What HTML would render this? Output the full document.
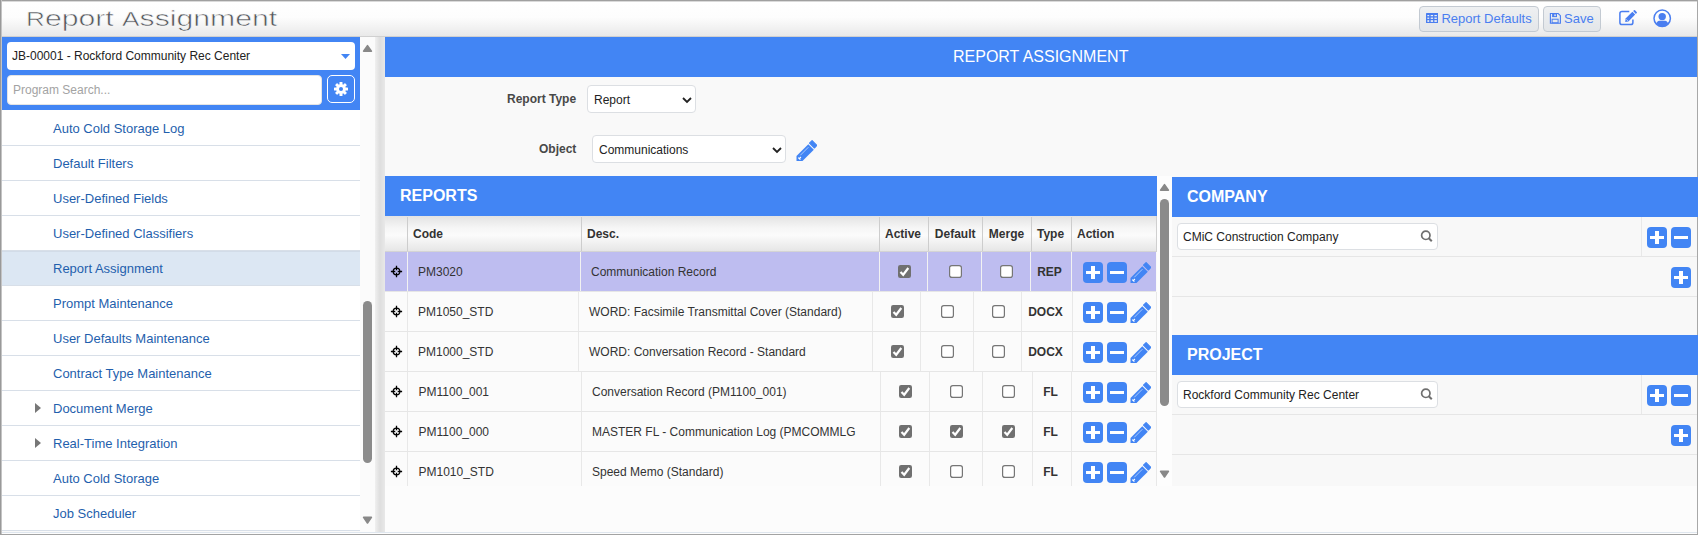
<!DOCTYPE html>
<html><head><meta charset="utf-8">
<style>
*{box-sizing:border-box;margin:0;padding:0}
html,body{width:1698px;height:535px;overflow:hidden;background:#f9f9f9;font-family:"Liberation Sans",sans-serif;position:relative}
.abs{position:absolute}
.txt{position:absolute;white-space:nowrap;line-height:1}
.btnsq{width:20px;height:21px;border-radius:4px;background:#4285f4}
.item{position:absolute;left:2px;width:358px;height:35px;border-bottom:1px solid #d8dfe8;color:#2062ab;font-size:13px;line-height:35px;padding-left:52px;white-space:nowrap;background:#fff}
.vl{position:absolute;width:1px}
.hl{position:absolute;height:1px}
</style></head>
<body>

<div class="abs" style="left:0;top:0;width:1698px;height:1px;background:#a0a0a0"></div>
<div class="abs" style="left:0;top:1px;width:1698px;height:1px;background:#dadada"></div>
<div class="abs" style="left:0;top:0;width:1px;height:535px;background:#999"></div>
<div class="abs" style="left:1px;top:0;width:1px;height:535px;background:#c4c4c4"></div>
<div class="abs" style="left:1697px;top:0;width:1px;height:535px;background:#a8a8a8"></div>
<div class="abs" style="left:2px;top:2px;width:1695px;height:34px;background:linear-gradient(#ffffff 0%,#fdfdfd 45%,#e9e9e9 100%)"></div>
<div class="abs" style="left:2px;top:36px;width:1695px;height:1px;background:#d0d0d0"></div>
<div class="txt" style="left:26px;top:7px;color:#55585d;transform:scaleX(1.33);transform-origin:0 0;-webkit-text-stroke:0.55px #fafafa;"><span style="font-size:19.7px">R</span><span style="font-size:22.7px">eport </span><span style="font-size:19.7px">A</span><span style="font-size:22.7px">ssignment</span></div>
<div class="abs" style="left:1419px;top:6px;width:120px;height:26px;border:1px solid #c3cad2;border-radius:4px;background:linear-gradient(#eef0f2,#e3e6e9)"></div>
<div class="abs" style="left:1543px;top:6px;width:58px;height:26px;border:1px solid #c3cad2;border-radius:4px;background:linear-gradient(#eef0f2,#e3e6e9)"></div>
<div class="txt" style="left:1441.4px;top:11.5px;font-size:13px;color:#4a7ef0">Report Defaults</div>
<div class="txt" style="left:1564px;top:11.5px;font-size:13px;color:#4a7ef0">Save</div>
<svg class="abs" style="left:1425.7px;top:12.9px" width="12.3" height="10.2" viewBox="0 0 12.3 10.2"><rect x="0" y="0" width="12.3" height="10.2" rx="0.6" fill="#4a7ef0"/>
<g fill="#eef1f4"><rect x="1.35" y="2.0" width="1.85" height="1.2"/><rect x="1.35" y="4.6" width="1.85" height="1.3"/><rect x="1.35" y="7.2" width="1.85" height="1.7"/><rect x="4.7" y="2.0" width="2.4" height="1.2"/><rect x="4.7" y="4.6" width="2.4" height="1.3"/><rect x="4.7" y="7.2" width="2.4" height="1.7"/><rect x="8.4" y="2.0" width="2.5" height="1.2"/><rect x="8.4" y="4.6" width="2.5" height="1.3"/><rect x="8.4" y="7.2" width="2.5" height="1.7"/></g></svg>
<svg class="abs" style="left:1549px;top:12px" width="13" height="13" viewBox="0 0 13 13"><path d="M1.4 1.5 H9.2 L11.4 3.7 V11.2 H1.4 Z" fill="none" stroke="#4a7ef0" stroke-width="1.15"/>
<rect x="3.1" y="1.8" width="4.9" height="3.3" fill="#4a7ef0"/><rect x="5.3" y="2.4" width="1.5" height="1.7" fill="#e6eaee"/><rect x="3.1" y="7.2" width="6" height="3.6" fill="none" stroke="#4a7ef0" stroke-width="1"/></svg>
<svg class="abs" style="left:1619px;top:10px" width="19" height="16" viewBox="0 0 19 16"><path d="M10.3 1.5 H3 Q0.9 1.5 0.9 3.6 V12.4 Q0.9 14.5 3 14.5 H11.8 Q13.9 14.5 13.9 12.4 V9.6" fill="none" stroke="#4a7ef0" stroke-width="1.5"/>
<path d="M6.6 8.6 L13.4 1.8 L16.2 4.6 L9.4 11.4 L6.2 12 Z" fill="#4a7ef0"/>
<path d="M14.1 1.1 L15 0.2 Q15.5 -0.2 16 0.3 L17.7 2 Q18.2 2.5 17.7 3 L16.9 3.9 Z" fill="#4a7ef0"/>
<path d="M7.6 9.6 L8.6 10.6" stroke="#fff" stroke-width="0.9"/>
</svg>
<svg class="abs" style="left:1653px;top:9px" width="19" height="19" viewBox="0 0 19 19"><circle cx="9.2" cy="9.3" r="8.2" fill="none" stroke="#4a7ef0" stroke-width="1.5"/>
<circle cx="9.2" cy="7.6" r="3.7" fill="#4a7ef0"/><path d="M3.2 14.6 Q4.4 11.6 7.4 11.6 H11 Q14 11.6 15.2 14.6 Q12.8 17.7 9.2 17.7 Q5.6 17.7 3.2 14.6 Z" fill="#4a7ef0"/>
<path d="M6.3 11.35 H12.1" stroke="#fff" stroke-width="0.6" opacity="0.8"/></svg>
<div class="abs" style="left:2px;top:37px;width:358px;height:494px;background:#fff"></div>
<div class="abs" style="left:2px;top:37px;width:358px;height:73px;background:#4285f4"></div>
<div class="abs" style="left:7px;top:42px;width:348px;height:28px;background:#fff;border-radius:4px"></div>
<div class="txt" style="left:12px;top:50px;font-size:12px;color:#222">JB-00001 - Rockford Community Rec Center</div>
<svg class="abs" style="left:341px;top:54px" width="9" height="5" viewBox="0 0 9 5"><path d="M0 0 H9 L4.5 5 Z" fill="#4285f4"/></svg>
<div class="abs" style="left:7px;top:75px;width:315px;height:30px;background:#fff;border-radius:4px;border:1px solid #e4e4e4"></div>
<div class="txt" style="left:13px;top:84px;font-size:12px;color:#a3a3a3">Program Search...</div>
<div class="abs" style="left:327px;top:75px;width:28px;height:28px;border:1px solid #fff;border-radius:5px"></div>
<svg class="abs" style="left:334px;top:82px" width="14" height="14" viewBox="0 0 14 14"><g fill="#fff" transform="translate(7 7)">
<circle r="4.8"/>
<rect x="-1.5" y="-7" width="3" height="14" rx="0.6"/><rect x="-1.5" y="-7" width="3" height="14" rx="0.6" transform="rotate(45)"/>
<rect x="-1.5" y="-7" width="3" height="14" rx="0.6" transform="rotate(90)"/><rect x="-1.5" y="-7" width="3" height="14" rx="0.6" transform="rotate(135)"/>
</g><circle cx="7" cy="7" r="2" fill="#4285f4"/></svg>
<div class="item" style="top:110px;height:36px;"></div>
<div class="txt" style="left:53px;top:122px;font-size:13px;color:#1f5fad">Auto Cold Storage Log</div>
<div class="item" style="top:146px;height:35px;"></div>
<div class="txt" style="left:53px;top:157px;font-size:13px;color:#1f5fad">Default Filters</div>
<div class="item" style="top:181px;height:35px;"></div>
<div class="txt" style="left:53px;top:192px;font-size:13px;color:#1f5fad">User-Defined Fields</div>
<div class="item" style="top:216px;height:35px;"></div>
<div class="txt" style="left:53px;top:227px;font-size:13px;color:#1f5fad">User-Defined Classifiers</div>
<div class="item" style="top:251px;height:35px;background:#dce7f3;border-top:1px solid #d2dce8;"></div>
<div class="txt" style="left:53px;top:262px;font-size:13px;color:#1f5fad">Report Assignment</div>
<div class="item" style="top:286px;height:35px;"></div>
<div class="txt" style="left:53px;top:297px;font-size:13px;color:#1f5fad">Prompt Maintenance</div>
<div class="item" style="top:321px;height:35px;"></div>
<div class="txt" style="left:53px;top:332px;font-size:13px;color:#1f5fad">User Defaults Maintenance</div>
<div class="item" style="top:356px;height:35px;"></div>
<div class="txt" style="left:53px;top:367px;font-size:13px;color:#1f5fad">Contract Type Maintenance</div>
<div class="item" style="top:391px;height:35px;"></div>
<div class="txt" style="left:53px;top:402px;font-size:13px;color:#1f5fad">Document Merge</div>
<svg class="abs" style="left:35px;top:403px" width="6" height="10" viewBox="0 0 6 10"><path d="M0 0 L6 5 L0 10 Z" fill="#777"/></svg>
<div class="item" style="top:426px;height:35px;"></div>
<div class="txt" style="left:53px;top:437px;font-size:13px;color:#1f5fad">Real-Time Integration</div>
<svg class="abs" style="left:35px;top:438px" width="6" height="10" viewBox="0 0 6 10"><path d="M0 0 L6 5 L0 10 Z" fill="#777"/></svg>
<div class="item" style="top:461px;height:35px;"></div>
<div class="txt" style="left:53px;top:472px;font-size:13px;color:#1f5fad">Auto Cold Storage</div>
<div class="item" style="top:496px;height:35px;"></div>
<div class="txt" style="left:53px;top:507px;font-size:13px;color:#1f5fad">Job Scheduler</div>
<div class="abs" style="left:2px;top:530px;width:358px;height:1px;background:#d8dfe8"></div>
<div class="abs" style="left:360px;top:37px;width:15px;height:495px;background:#fbfbfb"></div>
<svg class="abs" style="left:362px;top:44px" width="11" height="9" viewBox="0 0 11 9"><path d="M1.6 7.2 H9.4 L5.5 1.6 Z" fill="#888" stroke="#888" stroke-width="1.6" stroke-linejoin="round"/></svg>
<svg class="abs" style="left:362px;top:516px" width="11" height="9" viewBox="0 0 11 9"><path d="M1.6 1.4 H9.4 L5.5 7 Z" fill="#888" stroke="#888" stroke-width="1.6" stroke-linejoin="round"/></svg>
<div class="abs" style="left:363px;top:301px;width:9px;height:162px;border-radius:4.5px;background:#8b8b8b"></div>
<div class="abs" style="left:375px;top:37px;width:10px;height:495px;background:linear-gradient(90deg,#f0f0f0,#dedede 50%,#e8e8e8)"></div>
<div class="abs" style="left:385px;top:37px;width:1312px;height:40px;background:#4285f4"></div>
<div class="txt" style="left:953px;top:49px;font-size:16px;color:#fff">REPORT ASSIGNMENT</div>
<div class="txt" style="left:507px;top:93px;font-size:12px;font-weight:bold;color:#484848">Report Type</div>
<div class="abs" style="left:587px;top:85px;width:109px;height:28px;background:#fff;border:1px solid #dcdfe3;border-radius:4px"></div>
<div class="txt" style="left:594px;top:94px;font-size:12px;color:#222">Report</div>
<svg class="abs" style="left:682px;top:96.5px" width="10" height="7" viewBox="0 0 10 7"><path d="M1 1 L5 5 L9 1" fill="none" stroke="#222" stroke-width="1.8"/></svg>
<div class="txt" style="left:539px;top:143px;font-size:12px;font-weight:bold;color:#484848">Object</div>
<div class="abs" style="left:592px;top:135px;width:194px;height:28px;background:#fff;border:1px solid #dcdfe3;border-radius:4px"></div>
<div class="txt" style="left:599px;top:144px;font-size:12px;color:#222">Communications</div>
<svg class="abs" style="left:772px;top:146.5px" width="10" height="7" viewBox="0 0 10 7"><path d="M1 1 L5 5 L9 1" fill="none" stroke="#222" stroke-width="1.8"/></svg>
<svg class="abs" style="left:796px;top:140px" width="21" height="21" viewBox="0 0 21 21">
<path fill="#4285f4" d="M0.5 16 L12.3 4.2 L17.8 9.7 L6.5 21 L0.5 21 Z"/>
<path fill="#4285f4" stroke="#4285f4" stroke-width="1.1" stroke-linejoin="round" d="M13.5 3.1 L16.1 0.6 L20.9 5.4 L18.4 8 Z"/>
<path stroke="#fff" stroke-width="0.7" opacity="0.8" d="M4.3 15.3 L12.4 7.2"/>
<path stroke="#fff" stroke-width="1.2" d="M2.2 17.6 L4.4 19.6 M3.3 18.6 L4.9 17.0"/>
</svg>
<div class="abs" style="left:385px;top:176px;width:772px;height:40px;background:#4285f4"></div>
<div class="txt" style="left:400px;top:188px;font-size:16px;font-weight:bold;color:#fff">REPORTS</div>
<div class="abs" style="left:385px;top:216px;width:772px;height:36px;background:linear-gradient(#e3e3e3 0%,#f6f6f6 35%,#fbfbfb 55%,#e6e6e6 100%);border-bottom:1px solid #d4d4d4"></div>
<div class="vl" style="left:407px;top:217px;height:34px;background:#cdcdcd"></div>
<div class="vl" style="left:581px;top:217px;height:34px;background:#cdcdcd"></div>
<div class="vl" style="left:879px;top:217px;height:34px;background:#cdcdcd"></div>
<div class="vl" style="left:928px;top:217px;height:34px;background:#cdcdcd"></div>
<div class="vl" style="left:982px;top:217px;height:34px;background:#cdcdcd"></div>
<div class="vl" style="left:1031px;top:217px;height:34px;background:#cdcdcd"></div>
<div class="vl" style="left:1071px;top:217px;height:34px;background:#cdcdcd"></div>
<div class="vl" style="left:1156px;top:216px;height:36px;background:#cfcfcf"></div>
<div class="txt" style="left:413px;top:228px;font-size:12px;font-weight:bold;color:#333">Code</div>
<div class="txt" style="left:587px;top:228px;font-size:12px;font-weight:bold;color:#333">Desc.</div>
<div class="txt" style="left:885px;top:228px;font-size:12px;font-weight:bold;color:#333">Active</div>
<div class="txt" style="left:934.8px;top:228px;font-size:12px;font-weight:bold;color:#333">Default</div>
<div class="txt" style="left:988.8px;top:228px;font-size:12px;font-weight:bold;color:#333">Merge</div>
<div class="txt" style="left:1037px;top:228px;font-size:12px;font-weight:bold;color:#333">Type</div>
<div class="txt" style="left:1077px;top:228px;font-size:12px;font-weight:bold;color:#333">Action</div>
<div class="abs" style="left:385px;top:252px;width:772px;height:234px;overflow:hidden">
<div class="abs" style="left:0;top:0px;width:771px;height:40px;background:#bebdf0;border-bottom:1px solid #e6e6e6"></div>
<div class="vl" style="left:22px;top:0px;height:39px;background:#f2f2f2"></div>
<div class="vl" style="left:195px;top:0px;height:39px;background:#f2f2f2"></div>
<div class="vl" style="left:494px;top:0px;height:39px;background:#f2f2f2"></div>
<div class="vl" style="left:542px;top:0px;height:39px;background:#f2f2f2"></div>
<div class="vl" style="left:596px;top:0px;height:39px;background:#f2f2f2"></div>
<div class="vl" style="left:645px;top:0px;height:39px;background:#f2f2f2"></div>
<div class="vl" style="left:686px;top:0px;height:39px;background:#f2f2f2"></div>
<svg class="abs" style="left:5px;top:12.8px" width="13" height="13" viewBox="0 0 13 13">
<circle cx="6.5" cy="6.5" r="3.35" fill="none" stroke="#000" stroke-width="1.2"/>
<path stroke="#000" stroke-width="1.3" d="M6.5 0.8 V5.3 M6.5 7.7 V12.2 M0.9 6.5 H5.3 M7.7 6.5 H12.1"/>
</svg>
<div class="txt" style="left:33px;top:13.9px;font-size:12px;color:#333">PM3020</div>
<div class="txt" style="left:206px;top:13.9px;font-size:12px;color:#333">Communication Record</div>
<svg class="abs" style="left:512.5px;top:13.0px" width="13" height="13" viewBox="0 0 13 13"><rect x="0" y="0" width="13" height="13" rx="2.2" fill="#707070"/><path d="M2.5 6.9 L5.2 9.7 L10.3 3.0" fill="none" stroke="#fff" stroke-width="2.2"/></svg>
<svg class="abs" style="left:563.8px;top:13.0px" width="13" height="13" viewBox="0 0 13 13"><rect x="0.6" y="0.6" width="11.8" height="11.8" rx="2.2" fill="#fff" stroke="#767676" stroke-width="1.2"/></svg>
<svg class="abs" style="left:614.5px;top:13.0px" width="13" height="13" viewBox="0 0 13 13"><rect x="0.6" y="0.6" width="11.8" height="11.8" rx="2.2" fill="#fff" stroke="#767676" stroke-width="1.2"/></svg>
<div class="txt" style="left:624.5px;width:80px;text-align:center;top:13.9px;font-size:12px;font-weight:bold;color:#333">REP</div>
<div class="abs btnsq" style="left:697.7px;top:10px"><div class="abs" style="left:3px;top:9px;width:14px;height:3px;background:#fff"></div><div class="abs" style="left:8.4px;top:4px;width:3.8px;height:13px;background:#fff"></div></div>
<div class="abs btnsq" style="left:721.5px;top:10px"><div class="abs" style="left:3.5px;top:9px;width:14px;height:3px;background:#fff"></div></div>
<svg class="abs" style="left:745px;top:10px" width="21" height="21" viewBox="0 0 21 21">
<path fill="#4285f4" d="M0.5 16 L12.3 4.2 L17.8 9.7 L6.5 21 L0.5 21 Z"/>
<path fill="#4285f4" stroke="#4285f4" stroke-width="1.1" stroke-linejoin="round" d="M13.5 3.1 L16.1 0.6 L20.9 5.4 L18.4 8 Z"/>
<path stroke="#fff" stroke-width="0.7" opacity="0.8" d="M4.3 15.3 L12.4 7.2"/>
<path stroke="#fff" stroke-width="1.2" d="M2.2 17.6 L4.4 19.6 M3.3 18.6 L4.9 17.0"/>
</svg>
<div class="abs" style="left:0;top:40px;width:771px;height:40px;background:#fbfbfb;border-bottom:1px solid #e6e6e6"></div>
<div class="vl" style="left:22px;top:40px;height:39px;background:#e8e8e8"></div>
<div class="vl" style="left:193px;top:40px;height:39px;background:#e8e8e8"></div>
<div class="vl" style="left:487px;top:40px;height:39px;background:#e8e8e8"></div>
<div class="vl" style="left:535px;top:40px;height:39px;background:#e8e8e8"></div>
<div class="vl" style="left:588px;top:40px;height:39px;background:#e8e8e8"></div>
<div class="vl" style="left:636px;top:40px;height:39px;background:#e8e8e8"></div>
<div class="vl" style="left:687px;top:40px;height:39px;background:#e8e8e8"></div>
<div class="vl" style="left:771px;top:40px;height:40px;background:#e8e8e8"></div>
<svg class="abs" style="left:5px;top:52.8px" width="13" height="13" viewBox="0 0 13 13">
<circle cx="6.5" cy="6.5" r="3.35" fill="none" stroke="#000" stroke-width="1.2"/>
<path stroke="#000" stroke-width="1.3" d="M6.5 0.8 V5.3 M6.5 7.7 V12.2 M0.9 6.5 H5.3 M7.7 6.5 H12.1"/>
</svg>
<div class="txt" style="left:33px;top:53.9px;font-size:12px;color:#333">PM1050_STD</div>
<div class="txt" style="left:204px;top:53.9px;font-size:12px;color:#333">WORD: Facsimile Transmittal Cover (Standard)</div>
<svg class="abs" style="left:505.5px;top:53.0px" width="13" height="13" viewBox="0 0 13 13"><rect x="0" y="0" width="13" height="13" rx="2.2" fill="#707070"/><path d="M2.5 6.9 L5.2 9.7 L10.3 3.0" fill="none" stroke="#fff" stroke-width="2.2"/></svg>
<svg class="abs" style="left:555.5px;top:53.0px" width="13" height="13" viewBox="0 0 13 13"><rect x="0.6" y="0.6" width="11.8" height="11.8" rx="2.2" fill="#fff" stroke="#767676" stroke-width="1.2"/></svg>
<svg class="abs" style="left:607.0px;top:53.0px" width="13" height="13" viewBox="0 0 13 13"><rect x="0.6" y="0.6" width="11.8" height="11.8" rx="2.2" fill="#fff" stroke="#767676" stroke-width="1.2"/></svg>
<div class="txt" style="left:620.5px;width:80px;text-align:center;top:53.9px;font-size:12px;font-weight:bold;color:#333">DOCX</div>
<div class="abs btnsq" style="left:697.7px;top:50px"><div class="abs" style="left:3px;top:9px;width:14px;height:3px;background:#fff"></div><div class="abs" style="left:8.4px;top:4px;width:3.8px;height:13px;background:#fff"></div></div>
<div class="abs btnsq" style="left:721.5px;top:50px"><div class="abs" style="left:3.5px;top:9px;width:14px;height:3px;background:#fff"></div></div>
<svg class="abs" style="left:745px;top:50px" width="21" height="21" viewBox="0 0 21 21">
<path fill="#4285f4" d="M0.5 16 L12.3 4.2 L17.8 9.7 L6.5 21 L0.5 21 Z"/>
<path fill="#4285f4" stroke="#4285f4" stroke-width="1.1" stroke-linejoin="round" d="M13.5 3.1 L16.1 0.6 L20.9 5.4 L18.4 8 Z"/>
<path stroke="#fff" stroke-width="0.7" opacity="0.8" d="M4.3 15.3 L12.4 7.2"/>
<path stroke="#fff" stroke-width="1.2" d="M2.2 17.6 L4.4 19.6 M3.3 18.6 L4.9 17.0"/>
</svg>
<div class="abs" style="left:0;top:80px;width:771px;height:40px;background:#fbfbfb;border-bottom:1px solid #e6e6e6"></div>
<div class="vl" style="left:22px;top:80px;height:39px;background:#e8e8e8"></div>
<div class="vl" style="left:193px;top:80px;height:39px;background:#e8e8e8"></div>
<div class="vl" style="left:487px;top:80px;height:39px;background:#e8e8e8"></div>
<div class="vl" style="left:535px;top:80px;height:39px;background:#e8e8e8"></div>
<div class="vl" style="left:588px;top:80px;height:39px;background:#e8e8e8"></div>
<div class="vl" style="left:636px;top:80px;height:39px;background:#e8e8e8"></div>
<div class="vl" style="left:687px;top:80px;height:39px;background:#e8e8e8"></div>
<div class="vl" style="left:771px;top:80px;height:40px;background:#e8e8e8"></div>
<svg class="abs" style="left:5px;top:92.8px" width="13" height="13" viewBox="0 0 13 13">
<circle cx="6.5" cy="6.5" r="3.35" fill="none" stroke="#000" stroke-width="1.2"/>
<path stroke="#000" stroke-width="1.3" d="M6.5 0.8 V5.3 M6.5 7.7 V12.2 M0.9 6.5 H5.3 M7.7 6.5 H12.1"/>
</svg>
<div class="txt" style="left:33px;top:93.9px;font-size:12px;color:#333">PM1000_STD</div>
<div class="txt" style="left:204px;top:93.9px;font-size:12px;color:#333">WORD: Conversation Record - Standard</div>
<svg class="abs" style="left:505.5px;top:93.0px" width="13" height="13" viewBox="0 0 13 13"><rect x="0" y="0" width="13" height="13" rx="2.2" fill="#707070"/><path d="M2.5 6.9 L5.2 9.7 L10.3 3.0" fill="none" stroke="#fff" stroke-width="2.2"/></svg>
<svg class="abs" style="left:555.5px;top:93.0px" width="13" height="13" viewBox="0 0 13 13"><rect x="0.6" y="0.6" width="11.8" height="11.8" rx="2.2" fill="#fff" stroke="#767676" stroke-width="1.2"/></svg>
<svg class="abs" style="left:607.0px;top:93.0px" width="13" height="13" viewBox="0 0 13 13"><rect x="0.6" y="0.6" width="11.8" height="11.8" rx="2.2" fill="#fff" stroke="#767676" stroke-width="1.2"/></svg>
<div class="txt" style="left:620.5px;width:80px;text-align:center;top:93.9px;font-size:12px;font-weight:bold;color:#333">DOCX</div>
<div class="abs btnsq" style="left:697.7px;top:90px"><div class="abs" style="left:3px;top:9px;width:14px;height:3px;background:#fff"></div><div class="abs" style="left:8.4px;top:4px;width:3.8px;height:13px;background:#fff"></div></div>
<div class="abs btnsq" style="left:721.5px;top:90px"><div class="abs" style="left:3.5px;top:9px;width:14px;height:3px;background:#fff"></div></div>
<svg class="abs" style="left:745px;top:90px" width="21" height="21" viewBox="0 0 21 21">
<path fill="#4285f4" d="M0.5 16 L12.3 4.2 L17.8 9.7 L6.5 21 L0.5 21 Z"/>
<path fill="#4285f4" stroke="#4285f4" stroke-width="1.1" stroke-linejoin="round" d="M13.5 3.1 L16.1 0.6 L20.9 5.4 L18.4 8 Z"/>
<path stroke="#fff" stroke-width="0.7" opacity="0.8" d="M4.3 15.3 L12.4 7.2"/>
<path stroke="#fff" stroke-width="1.2" d="M2.2 17.6 L4.4 19.6 M3.3 18.6 L4.9 17.0"/>
</svg>
<div class="abs" style="left:0;top:120px;width:771px;height:40px;background:#fbfbfb;border-bottom:1px solid #e6e6e6"></div>
<div class="vl" style="left:22px;top:120px;height:39px;background:#e8e8e8"></div>
<div class="vl" style="left:196px;top:120px;height:39px;background:#e8e8e8"></div>
<div class="vl" style="left:495px;top:120px;height:39px;background:#e8e8e8"></div>
<div class="vl" style="left:544px;top:120px;height:39px;background:#e8e8e8"></div>
<div class="vl" style="left:597px;top:120px;height:39px;background:#e8e8e8"></div>
<div class="vl" style="left:647px;top:120px;height:39px;background:#e8e8e8"></div>
<div class="vl" style="left:686px;top:120px;height:39px;background:#e8e8e8"></div>
<div class="vl" style="left:771px;top:120px;height:40px;background:#e8e8e8"></div>
<svg class="abs" style="left:5px;top:132.8px" width="13" height="13" viewBox="0 0 13 13">
<circle cx="6.5" cy="6.5" r="3.35" fill="none" stroke="#000" stroke-width="1.2"/>
<path stroke="#000" stroke-width="1.3" d="M6.5 0.8 V5.3 M6.5 7.7 V12.2 M0.9 6.5 H5.3 M7.7 6.5 H12.1"/>
</svg>
<div class="txt" style="left:33.5px;top:133.9px;font-size:12px;color:#333">PM1100_001</div>
<div class="txt" style="left:207px;top:133.9px;font-size:12px;color:#333">Conversation Record (PM1100_001)</div>
<svg class="abs" style="left:514.0px;top:133.0px" width="13" height="13" viewBox="0 0 13 13"><rect x="0" y="0" width="13" height="13" rx="2.2" fill="#707070"/><path d="M2.5 6.9 L5.2 9.7 L10.3 3.0" fill="none" stroke="#fff" stroke-width="2.2"/></svg>
<svg class="abs" style="left:564.5px;top:133.0px" width="13" height="13" viewBox="0 0 13 13"><rect x="0.6" y="0.6" width="11.8" height="11.8" rx="2.2" fill="#fff" stroke="#767676" stroke-width="1.2"/></svg>
<svg class="abs" style="left:617.0px;top:133.0px" width="13" height="13" viewBox="0 0 13 13"><rect x="0.6" y="0.6" width="11.8" height="11.8" rx="2.2" fill="#fff" stroke="#767676" stroke-width="1.2"/></svg>
<div class="txt" style="left:625.5px;width:80px;text-align:center;top:133.9px;font-size:12px;font-weight:bold;color:#333">FL</div>
<div class="abs btnsq" style="left:697.7px;top:130px"><div class="abs" style="left:3px;top:9px;width:14px;height:3px;background:#fff"></div><div class="abs" style="left:8.4px;top:4px;width:3.8px;height:13px;background:#fff"></div></div>
<div class="abs btnsq" style="left:721.5px;top:130px"><div class="abs" style="left:3.5px;top:9px;width:14px;height:3px;background:#fff"></div></div>
<svg class="abs" style="left:745px;top:130px" width="21" height="21" viewBox="0 0 21 21">
<path fill="#4285f4" d="M0.5 16 L12.3 4.2 L17.8 9.7 L6.5 21 L0.5 21 Z"/>
<path fill="#4285f4" stroke="#4285f4" stroke-width="1.1" stroke-linejoin="round" d="M13.5 3.1 L16.1 0.6 L20.9 5.4 L18.4 8 Z"/>
<path stroke="#fff" stroke-width="0.7" opacity="0.8" d="M4.3 15.3 L12.4 7.2"/>
<path stroke="#fff" stroke-width="1.2" d="M2.2 17.6 L4.4 19.6 M3.3 18.6 L4.9 17.0"/>
</svg>
<div class="abs" style="left:0;top:160px;width:771px;height:40px;background:#fbfbfb;border-bottom:1px solid #e6e6e6"></div>
<div class="vl" style="left:22px;top:160px;height:39px;background:#e8e8e8"></div>
<div class="vl" style="left:196px;top:160px;height:39px;background:#e8e8e8"></div>
<div class="vl" style="left:495px;top:160px;height:39px;background:#e8e8e8"></div>
<div class="vl" style="left:544px;top:160px;height:39px;background:#e8e8e8"></div>
<div class="vl" style="left:597px;top:160px;height:39px;background:#e8e8e8"></div>
<div class="vl" style="left:647px;top:160px;height:39px;background:#e8e8e8"></div>
<div class="vl" style="left:686px;top:160px;height:39px;background:#e8e8e8"></div>
<div class="vl" style="left:771px;top:160px;height:40px;background:#e8e8e8"></div>
<svg class="abs" style="left:5px;top:172.8px" width="13" height="13" viewBox="0 0 13 13">
<circle cx="6.5" cy="6.5" r="3.35" fill="none" stroke="#000" stroke-width="1.2"/>
<path stroke="#000" stroke-width="1.3" d="M6.5 0.8 V5.3 M6.5 7.7 V12.2 M0.9 6.5 H5.3 M7.7 6.5 H12.1"/>
</svg>
<div class="txt" style="left:33.5px;top:173.9px;font-size:12px;color:#333">PM1100_000</div>
<div class="txt" style="left:207px;top:173.9px;font-size:12px;color:#333">MASTER FL - Communication Log (PMCOMMLG</div>
<svg class="abs" style="left:514.0px;top:173.0px" width="13" height="13" viewBox="0 0 13 13"><rect x="0" y="0" width="13" height="13" rx="2.2" fill="#707070"/><path d="M2.5 6.9 L5.2 9.7 L10.3 3.0" fill="none" stroke="#fff" stroke-width="2.2"/></svg>
<svg class="abs" style="left:564.5px;top:173.0px" width="13" height="13" viewBox="0 0 13 13"><rect x="0" y="0" width="13" height="13" rx="2.2" fill="#707070"/><path d="M2.5 6.9 L5.2 9.7 L10.3 3.0" fill="none" stroke="#fff" stroke-width="2.2"/></svg>
<svg class="abs" style="left:617.0px;top:173.0px" width="13" height="13" viewBox="0 0 13 13"><rect x="0" y="0" width="13" height="13" rx="2.2" fill="#707070"/><path d="M2.5 6.9 L5.2 9.7 L10.3 3.0" fill="none" stroke="#fff" stroke-width="2.2"/></svg>
<div class="txt" style="left:625.5px;width:80px;text-align:center;top:173.9px;font-size:12px;font-weight:bold;color:#333">FL</div>
<div class="abs btnsq" style="left:697.7px;top:170px"><div class="abs" style="left:3px;top:9px;width:14px;height:3px;background:#fff"></div><div class="abs" style="left:8.4px;top:4px;width:3.8px;height:13px;background:#fff"></div></div>
<div class="abs btnsq" style="left:721.5px;top:170px"><div class="abs" style="left:3.5px;top:9px;width:14px;height:3px;background:#fff"></div></div>
<svg class="abs" style="left:745px;top:170px" width="21" height="21" viewBox="0 0 21 21">
<path fill="#4285f4" d="M0.5 16 L12.3 4.2 L17.8 9.7 L6.5 21 L0.5 21 Z"/>
<path fill="#4285f4" stroke="#4285f4" stroke-width="1.1" stroke-linejoin="round" d="M13.5 3.1 L16.1 0.6 L20.9 5.4 L18.4 8 Z"/>
<path stroke="#fff" stroke-width="0.7" opacity="0.8" d="M4.3 15.3 L12.4 7.2"/>
<path stroke="#fff" stroke-width="1.2" d="M2.2 17.6 L4.4 19.6 M3.3 18.6 L4.9 17.0"/>
</svg>
<div class="abs" style="left:0;top:200px;width:771px;height:40px;background:#fbfbfb;border-bottom:1px solid #e6e6e6"></div>
<div class="vl" style="left:22px;top:200px;height:39px;background:#e8e8e8"></div>
<div class="vl" style="left:196px;top:200px;height:39px;background:#e8e8e8"></div>
<div class="vl" style="left:495px;top:200px;height:39px;background:#e8e8e8"></div>
<div class="vl" style="left:544px;top:200px;height:39px;background:#e8e8e8"></div>
<div class="vl" style="left:597px;top:200px;height:39px;background:#e8e8e8"></div>
<div class="vl" style="left:647px;top:200px;height:39px;background:#e8e8e8"></div>
<div class="vl" style="left:686px;top:200px;height:39px;background:#e8e8e8"></div>
<div class="vl" style="left:771px;top:200px;height:40px;background:#e8e8e8"></div>
<svg class="abs" style="left:5px;top:212.8px" width="13" height="13" viewBox="0 0 13 13">
<circle cx="6.5" cy="6.5" r="3.35" fill="none" stroke="#000" stroke-width="1.2"/>
<path stroke="#000" stroke-width="1.3" d="M6.5 0.8 V5.3 M6.5 7.7 V12.2 M0.9 6.5 H5.3 M7.7 6.5 H12.1"/>
</svg>
<div class="txt" style="left:33.5px;top:213.9px;font-size:12px;color:#333">PM1010_STD</div>
<div class="txt" style="left:207px;top:213.9px;font-size:12px;color:#333">Speed Memo (Standard)</div>
<svg class="abs" style="left:514.0px;top:213.0px" width="13" height="13" viewBox="0 0 13 13"><rect x="0" y="0" width="13" height="13" rx="2.2" fill="#707070"/><path d="M2.5 6.9 L5.2 9.7 L10.3 3.0" fill="none" stroke="#fff" stroke-width="2.2"/></svg>
<svg class="abs" style="left:564.5px;top:213.0px" width="13" height="13" viewBox="0 0 13 13"><rect x="0.6" y="0.6" width="11.8" height="11.8" rx="2.2" fill="#fff" stroke="#767676" stroke-width="1.2"/></svg>
<svg class="abs" style="left:617.0px;top:213.0px" width="13" height="13" viewBox="0 0 13 13"><rect x="0.6" y="0.6" width="11.8" height="11.8" rx="2.2" fill="#fff" stroke="#767676" stroke-width="1.2"/></svg>
<div class="txt" style="left:625.5px;width:80px;text-align:center;top:213.9px;font-size:12px;font-weight:bold;color:#333">FL</div>
<div class="abs btnsq" style="left:697.7px;top:210px"><div class="abs" style="left:3px;top:9px;width:14px;height:3px;background:#fff"></div><div class="abs" style="left:8.4px;top:4px;width:3.8px;height:13px;background:#fff"></div></div>
<div class="abs btnsq" style="left:721.5px;top:210px"><div class="abs" style="left:3.5px;top:9px;width:14px;height:3px;background:#fff"></div></div>
<svg class="abs" style="left:745px;top:210px" width="21" height="21" viewBox="0 0 21 21">
<path fill="#4285f4" d="M0.5 16 L12.3 4.2 L17.8 9.7 L6.5 21 L0.5 21 Z"/>
<path fill="#4285f4" stroke="#4285f4" stroke-width="1.1" stroke-linejoin="round" d="M13.5 3.1 L16.1 0.6 L20.9 5.4 L18.4 8 Z"/>
<path stroke="#fff" stroke-width="0.7" opacity="0.8" d="M4.3 15.3 L12.4 7.2"/>
<path stroke="#fff" stroke-width="1.2" d="M2.2 17.6 L4.4 19.6 M3.3 18.6 L4.9 17.0"/>
</svg>
</div>
<div class="abs" style="left:1157px;top:176px;width:15px;height:310px;background:#fdfdfd"></div>
<svg class="abs" style="left:1159px;top:183px" width="11" height="9" viewBox="0 0 11 9"><path d="M1.6 7.2 H9.4 L5.5 1.6 Z" fill="#888" stroke="#888" stroke-width="1.6" stroke-linejoin="round"/></svg>
<svg class="abs" style="left:1159px;top:470px" width="11" height="9" viewBox="0 0 11 9"><path d="M1.6 1.4 H9.4 L5.5 7 Z" fill="#888" stroke="#888" stroke-width="1.6" stroke-linejoin="round"/></svg>
<div class="abs" style="left:1160px;top:199px;width:9px;height:207px;border-radius:4.5px;background:#8b8b8b"></div>
<div class="abs" style="left:1172px;top:216px;width:525px;height:270px;background:#f8f8f8"></div>
<div class="abs" style="left:385px;top:486px;width:1312px;height:46px;background:#fcfcfc"></div>
<div class="abs" style="left:1172px;top:177px;width:1525px;height:40px;background:#4285f4"></div>
<div class="txt" style="left:1187px;top:189px;font-size:16px;font-weight:bold;color:#fff">COMPANY</div>
<div class="abs" style="left:1172px;top:217px;width:525px;height:40px;background:#f8f8f8;border-bottom:1px solid #e6e6e6"></div>
<div class="vl" style="left:1641px;top:217px;height:39px;background:#e8e8e8"></div>
<div class="abs" style="left:1177px;top:222.5px;width:261px;height:27.5px;background:#fff;border:1px solid #dcdfe3;border-radius:4px"></div>
<div class="txt" style="left:1183px;top:231px;font-size:12px;color:#222">CMiC Construction Company</div>
<svg class="abs" style="left:1420px;top:230px" width="13" height="13" viewBox="0 0 13 13"><circle cx="5.8" cy="5.3" r="4.2" fill="none" stroke="#6f6f6f" stroke-width="1.7"/><path d="M8.8 8.3 L11.8 11.3" stroke="#6f6f6f" stroke-width="2"/></svg>
<div class="abs btnsq" style="left:1646.6px;top:227px"><div class="abs" style="left:3px;top:9px;width:14px;height:3px;background:#fff"></div><div class="abs" style="left:8.4px;top:4px;width:3.8px;height:13px;background:#fff"></div></div>
<div class="abs btnsq" style="left:1670.8px;top:227px"><div class="abs" style="left:3.5px;top:9px;width:14px;height:3px;background:#fff"></div></div>
<div class="abs" style="left:1172px;top:257px;width:525px;height:40px;background:#f8f8f8;border-bottom:1px solid #e6e6e6"></div>
<div class="abs btnsq" style="left:1671px;top:267px"><div class="abs" style="left:3px;top:9px;width:14px;height:3px;background:#fff"></div><div class="abs" style="left:8.4px;top:4px;width:3.8px;height:13px;background:#fff"></div></div>
<div class="abs" style="left:1172px;top:335px;width:1525px;height:40px;background:#4285f4"></div>
<div class="txt" style="left:1187px;top:347px;font-size:16px;font-weight:bold;color:#fff">PROJECT</div>
<div class="abs" style="left:1172px;top:375px;width:525px;height:40px;background:#f8f8f8;border-bottom:1px solid #e6e6e6"></div>
<div class="vl" style="left:1641px;top:375px;height:39px;background:#e8e8e8"></div>
<div class="abs" style="left:1177px;top:380.5px;width:261px;height:27.5px;background:#fff;border:1px solid #dcdfe3;border-radius:4px"></div>
<div class="txt" style="left:1183px;top:389px;font-size:12px;color:#222">Rockford Community Rec Center</div>
<svg class="abs" style="left:1420px;top:388px" width="13" height="13" viewBox="0 0 13 13"><circle cx="5.8" cy="5.3" r="4.2" fill="none" stroke="#6f6f6f" stroke-width="1.7"/><path d="M8.8 8.3 L11.8 11.3" stroke="#6f6f6f" stroke-width="2"/></svg>
<div class="abs btnsq" style="left:1646.6px;top:385px"><div class="abs" style="left:3px;top:9px;width:14px;height:3px;background:#fff"></div><div class="abs" style="left:8.4px;top:4px;width:3.8px;height:13px;background:#fff"></div></div>
<div class="abs btnsq" style="left:1670.8px;top:385px"><div class="abs" style="left:3.5px;top:9px;width:14px;height:3px;background:#fff"></div></div>
<div class="abs" style="left:1172px;top:415px;width:525px;height:40px;background:#f8f8f8;border-bottom:1px solid #e6e6e6"></div>
<div class="abs btnsq" style="left:1671px;top:425px"><div class="abs" style="left:3px;top:9px;width:14px;height:3px;background:#fff"></div><div class="abs" style="left:8.4px;top:4px;width:3.8px;height:13px;background:#fff"></div></div>
<div class="abs" style="left:2px;top:532px;width:1695px;height:1px;background:#dfe6ee"></div>
<div class="abs" style="left:2px;top:533px;width:1695px;height:1px;background:#fdfdfd"></div>
<div class="abs" style="left:0;top:534px;width:1698px;height:1px;background:#a3a3a3"></div>
</body></html>
